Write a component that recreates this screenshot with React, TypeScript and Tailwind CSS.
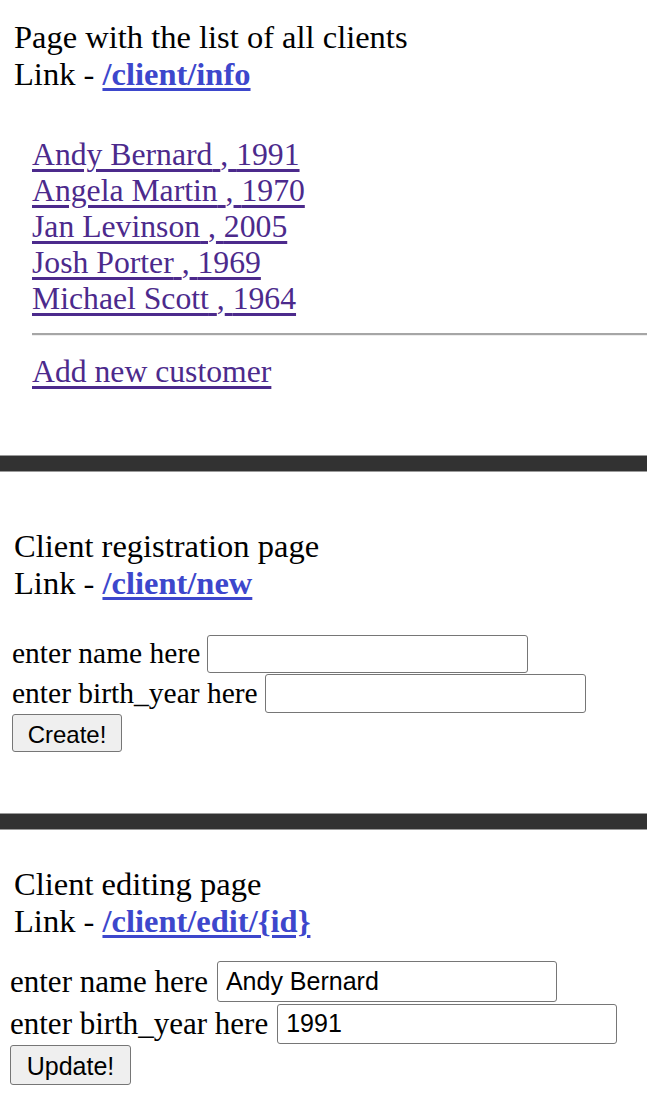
const clients = [
	{ name: "Andy Bernard", year: 1991 },
	{ name: "Angela Martin", year: 1970 },
	{ name: "Jan Levinson", year: 2005 },
	{ name: "Josh Porter", year: 1969 },
	{ name: "Michael Scott", year: 1964 },
];

const serif = "font-['Liberation_Serif',serif]";
const sans = "font-['Liberation_Sans',Arial,sans-serif]";

const Divider = () => (
	<div className="h-[17px] w-full border-y border-[#9a9a9a] bg-[#323232]" />
);

const RouteTitle = ({ title, path }: { title: string; path: string }) => (
	<div className="text-[32.5px] leading-[37px] text-black">
		<div>{title}</div>
		<div>
			Link -{" "}
			<a className="font-bold text-[#3d47cc] underline decoration-[3px] underline-offset-[3px]">
				{path}
			</a>
		</div>
	</div>
);

export default function App() {
	return (
		<div className={`${serif} w-[647px] bg-white`}>
			{/* client list */}
			<div className="pl-[14px] pt-[19px]">
				<RouteTitle title="Page with the list of all clients" path="/client/info" />
				<div className="ml-[18px] mt-[44px] text-[31.7px] leading-[36px] text-[#4c2a8c]">
					{clients.map((c) => (
						<div key={c.name}>
							<a className="underline decoration-[3px] underline-offset-[4px]">{c.name} </a>
							,<a className="underline decoration-[3px] underline-offset-[4px]"> {c.year}</a>
						</div>
					))}
					<hr className="mt-[16px] border-t-2 border-[#a6a6a6] [border-bottom:1px_solid_#eeeeee]" />
					<a className="mt-[18px] block underline decoration-[3px] underline-offset-[4px]">
						Add new customer
					</a>
				</div>
			</div>
			<div className="mt-[65px]">
				<Divider />
			</div>

			{/* registration */}
			<div className="pl-[14px] pt-[56px]">
				<RouteTitle title="Client registration page" path="/client/new" />
			</div>
			<div className="mt-[32px] pl-[12px] text-[29.5px] leading-[39px]">
				<div className="flex items-center gap-[7px]">
					<span>enter name here</span>
					<input className={`${sans} h-[38px] w-[321px] rounded-[3px] border border-[#767676] px-2 text-[24px]`} />
				</div>
				<div className="mt-[1px] flex items-center gap-[7px]">
					<span>enter birth_year here</span>
					<input className={`${sans} h-[39px] w-[321px] rounded-[3px] border border-[#767676] px-2 text-[24px]`} />
				</div>
				<button className={`${sans} mt-[1px] h-[38px] w-[110px] rounded-[3px] border border-[#767676] bg-[#efefef] text-[24px] text-black`}>
					Create!
				</button>
			</div>
			<div className="mt-[60px]">
				<Divider />
			</div>

			{/* editing */}
			<div className="pl-[14px] pt-[36px]">
				<RouteTitle title="Client editing page" path="/client/edit/{id}" />
			</div>
			<div className="mt-[21px] pl-[10px] text-[31px] leading-[41px]">
				<div className="flex items-center gap-[9px]">
					<span>enter name here</span>
					<input
						defaultValue="Andy Bernard"
						className={`${sans} h-[41px] w-[340px] rounded-[3px] border border-[#767676] px-[8px] text-[25px] text-black`}
					/>
				</div>
				<div className="mt-[1px] flex items-center gap-[9px]">
					<span>enter birth_year here</span>
					<input
						defaultValue="1991"
						className={`${sans} h-[40px] w-[340px] rounded-[3px] border border-[#767676] px-[8px] text-[25px] text-black`}
					/>
				</div>
				<button className={`${sans} mt-[1px] h-[40px] w-[121px] rounded-[3px] border border-[#767676] bg-[#efefef] text-[25px] text-black`}>
					Update!
				</button>
			</div>
		</div>
	);
}
